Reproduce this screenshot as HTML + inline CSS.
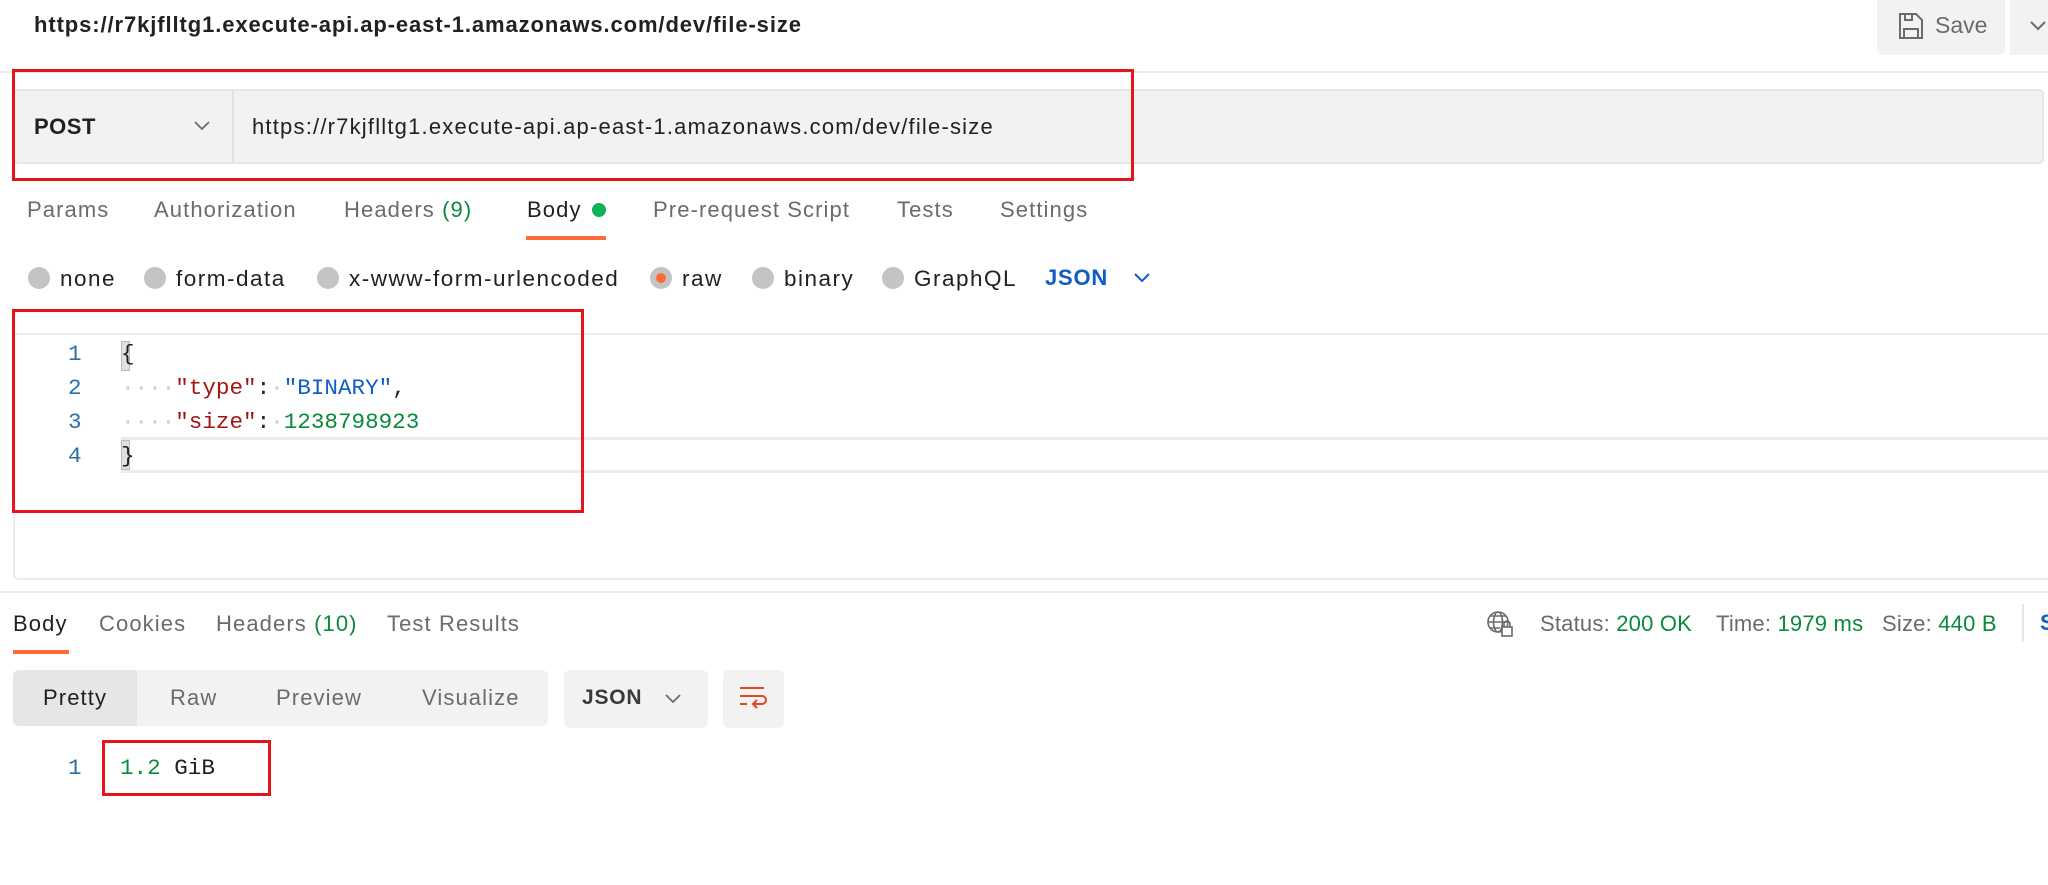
<!DOCTYPE html>
<html><head><meta charset="utf-8"><style>
*{margin:0;padding:0;box-sizing:border-box}
body{width:2048px;height:885px;background:#fff;position:relative;overflow:hidden;font-family:"Liberation Sans",sans-serif;color:#212121}
.a{position:absolute;white-space:nowrap}
.t{font-size:22px;color:#6b6b6b;line-height:28px;letter-spacing:1.1px}
.r{font-size:22.5px;letter-spacing:1.5px}
.s{letter-spacing:0.2px}
.g{color:#0a8a3c}
.mono{font-family:"Liberation Mono",monospace;font-size:22.6px;line-height:28px}
.rad{position:absolute;width:22px;height:22px;border-radius:50%;background:#c4c4c4;top:267px}
.red{position:absolute;border:3px solid #e8141c}
</style></head><body>
<div class="a" style="left:34px;top:12px;font-size:22px;font-weight:bold;color:#212121;letter-spacing:0.9px">https://r7kjflltg1.execute-api.ap-east-1.amazonaws.com/dev/file-size</div>
<div class="a" style="left:1877px;top:0;width:128px;height:55px;background:#f2f2f2;border-radius:0 0 6px 6px"></div>
<svg class="a" style="left:1898px;top:12px" width="26" height="28" viewBox="0 0 26 28"><path d="M2 2h16l6 6v18H2z M7 2v6h7V2 M6 26v-9h14v9" fill="none" stroke="#6b6b6b" stroke-width="2"/></svg>
<div class="a" style="left:1935px;top:12px;font-size:23px;color:#6b6b6b">Save</div>
<div class="a" style="left:2010px;top:0;width:38px;height:55px;background:#f2f2f2"></div>
<svg class="a" style="left:2030px;top:20px" width="16" height="12"><path d="M1 2l7 7 7-7" fill="none" stroke="#6b6b6b" stroke-width="2"/></svg>
<div class="a" style="left:0;top:71px;width:2048px;height:2px;background:#ededed"></div>
<div class="a" style="left:13px;top:89px;width:2031px;height:75px;background:#f2f2f2;border:2px solid #e6e6e6;border-radius:5px"></div>
<div class="a" style="left:232px;top:90px;width:2px;height:73px;background:#e3e3e3"></div>
<div class="a" style="left:34px;top:114px;font-size:22px;font-weight:bold;color:#212121;letter-spacing:0.5px">POST</div>
<svg class="a" style="left:194px;top:120px" width="16" height="12"><path d="M1 2l7 7 7-7" fill="none" stroke="#6b6b6b" stroke-width="1.8"/></svg>
<div class="a" style="left:252px;top:114px;font-size:22px;color:#212121;letter-spacing:1.2px">https://r7kjflltg1.execute-api.ap-east-1.amazonaws.com/dev/file-size</div>
<div class="red" style="left:12px;top:69px;width:1122px;height:112px"></div>
<div class="a t" style="left:27px;top:196px">Params</div>
<div class="a t" style="left:154px;top:196px">Authorization</div>
<div class="a t" style="left:344px;top:196px">Headers <span class="g">(9)</span></div>
<div class="a t" style="left:527px;top:196px;color:#212121">Body</div>
<div class="a" style="left:592px;top:203px;width:14px;height:14px;border-radius:50%;background:#0cb25a"></div>
<div class="a" style="left:526px;top:236px;width:80px;height:4px;background:#ff6c37"></div>
<div class="a t" style="left:653px;top:196px">Pre-request Script</div>
<div class="a t" style="left:897px;top:196px">Tests</div>
<div class="a t" style="left:1000px;top:196px">Settings</div>
<div class="rad" style="left:28px"></div><div class="a t r" style="left:60px;top:265px;color:#212121">none</div>
<div class="rad" style="left:144px"></div><div class="a t r" style="left:176px;top:265px;color:#212121">form-data</div>
<div class="rad" style="left:317px"></div><div class="a t r" style="left:349px;top:265px;color:#212121">x-www-form-urlencoded</div>
<div class="rad" style="left:650px"></div><div class="a" style="left:656px;top:273px;width:10px;height:10px;border-radius:50%;background:#ff6c37"></div><div class="a t r" style="left:682px;top:265px;color:#212121">raw</div>
<div class="rad" style="left:752px"></div><div class="a t r" style="left:784px;top:265px;color:#212121">binary</div>
<div class="rad" style="left:882px"></div><div class="a t r" style="left:914px;top:265px;color:#212121">GraphQL</div>
<div class="a" style="left:1045px;top:265px;font-size:22px;font-weight:bold;color:#0f5ec7;letter-spacing:0.8px">JSON</div>
<svg class="a" style="left:1134px;top:272px" width="16" height="12"><path d="M1 2l7 7 7-7" fill="none" stroke="#0f5ec7" stroke-width="2"/></svg>
<div class="a" style="left:13px;top:333px;width:2035px;height:247px;border:2px solid #ececec;border-right:none;border-radius:5px 0 0 5px"></div>
<div class="a" style="left:121px;top:437px;width:1927px;height:36px;border-top:3px solid #ececec;border-bottom:3px solid #ececec"></div>
<div class="a" style="left:121px;top:341px;width:9px;height:30px;background:#e0e0e0;border:1px solid #bbb"></div>
<div class="a" style="left:121px;top:440px;width:9px;height:30px;background:#e0e0e0;border:1px solid #bbb"></div>
<div class="a mono" style="left:68px;top:340px;color:#2c6fa6">1</div>
<div class="a mono" style="left:68px;top:374px;color:#2c6fa6">2</div>
<div class="a mono" style="left:68px;top:408px;color:#2c6fa6">3</div>
<div class="a mono" style="left:68px;top:442px;color:#2c6fa6">4</div>
<div class="a mono" style="left:121px;top:340px">{</div>
<div class="a mono" style="left:121px;top:374px"><span style="color:#ccc">····</span><span style="color:#a31515">"type"</span>:<span style="color:#ccc">·</span><span style="color:#0f5ec7">"BINARY"</span>,</div>
<div class="a mono" style="left:121px;top:408px"><span style="color:#ccc">····</span><span style="color:#a31515">"size"</span>:<span style="color:#ccc">·</span><span class="g">1238798923</span></div>
<div class="a mono" style="left:121px;top:442px">}</div>
<div class="red" style="left:12px;top:309px;width:572px;height:204px"></div>
<div class="a" style="left:0;top:591px;width:2048px;height:2px;background:#ededed"></div>
<div class="a t" style="left:13px;top:610px;color:#212121">Body</div>
<div class="a" style="left:13px;top:650px;width:56px;height:4px;background:#ff6c37"></div>
<div class="a t" style="left:99px;top:610px">Cookies</div>
<div class="a t" style="left:216px;top:610px">Headers <span class="g">(10)</span></div>
<div class="a t" style="left:387px;top:610px">Test Results</div>
<svg class="a" style="left:1486px;top:610px" width="28" height="28" viewBox="0 0 28 28"><g fill="none" stroke="#6b6b6b" stroke-width="1.6"><circle cx="12" cy="12" r="10"/><ellipse cx="12" cy="12" rx="4.5" ry="10"/><path d="M2 12h20M4 6h16M4 18h10"/><rect x="16" y="17" width="10" height="9" fill="#fff"/><path d="M18 17v-3a3 3 0 0 1 6 0v3"/></g></svg>
<div class="a t s" style="left:1540px;top:610px">Status: <span class="g">200 OK</span></div>
<div class="a t s" style="left:1716px;top:610px">Time: <span class="g">1979 ms</span></div>
<div class="a t s" style="left:1882px;top:610px">Size: <span class="g">440 B</span></div>
<div class="a" style="left:2022px;top:604px;width:2px;height:38px;background:#e6e6e6"></div>
<div class="a" style="left:2040px;top:610px;font-size:22px;color:#0f5ec7;font-weight:bold">S</div>
<div class="a" style="left:13px;top:670px;width:535px;height:56px;background:#f2f2f2;border-radius:6px"></div>
<div class="a" style="left:13px;top:670px;width:124px;height:56px;background:#e6e6e6;border-radius:6px 0 0 6px"></div>
<div class="a t" style="left:43px;top:684px;color:#212121">Pretty</div>
<div class="a t" style="left:170px;top:684px">Raw</div>
<div class="a t" style="left:276px;top:684px">Preview</div>
<div class="a t" style="left:422px;top:684px">Visualize</div>
<div class="a" style="left:564px;top:670px;width:144px;height:58px;background:#f2f2f2;border-radius:6px"></div>
<div class="a" style="left:582px;top:686px;font-size:21px;font-weight:bold;color:#3a3a3a;letter-spacing:0.8px">JSON</div>
<svg class="a" style="left:665px;top:693px" width="16" height="12"><path d="M1 2l7 7 7-7" fill="none" stroke="#6b6b6b" stroke-width="1.8"/></svg>
<div class="a" style="left:723px;top:670px;width:61px;height:58px;background:#f2f2f2;border-radius:6px"></div>
<svg class="a" style="left:738px;top:685px" width="30" height="28" viewBox="0 0 30 28"><g fill="none" stroke="#e0471b" stroke-width="2"><path d="M2 3h24M2 11h22a4 4 0 0 1 0 8h-8M2 19h7"/><path d="M19 15l-4 4 4 4"/></g></svg>
<div class="a mono" style="left:68px;top:754px;color:#2c6fa6">1</div>
<div class="a mono" style="left:120px;top:754px"><span class="g">1.2</span> GiB</div>
<div class="red" style="left:102px;top:740px;width:169px;height:56px"></div>
</body></html>
